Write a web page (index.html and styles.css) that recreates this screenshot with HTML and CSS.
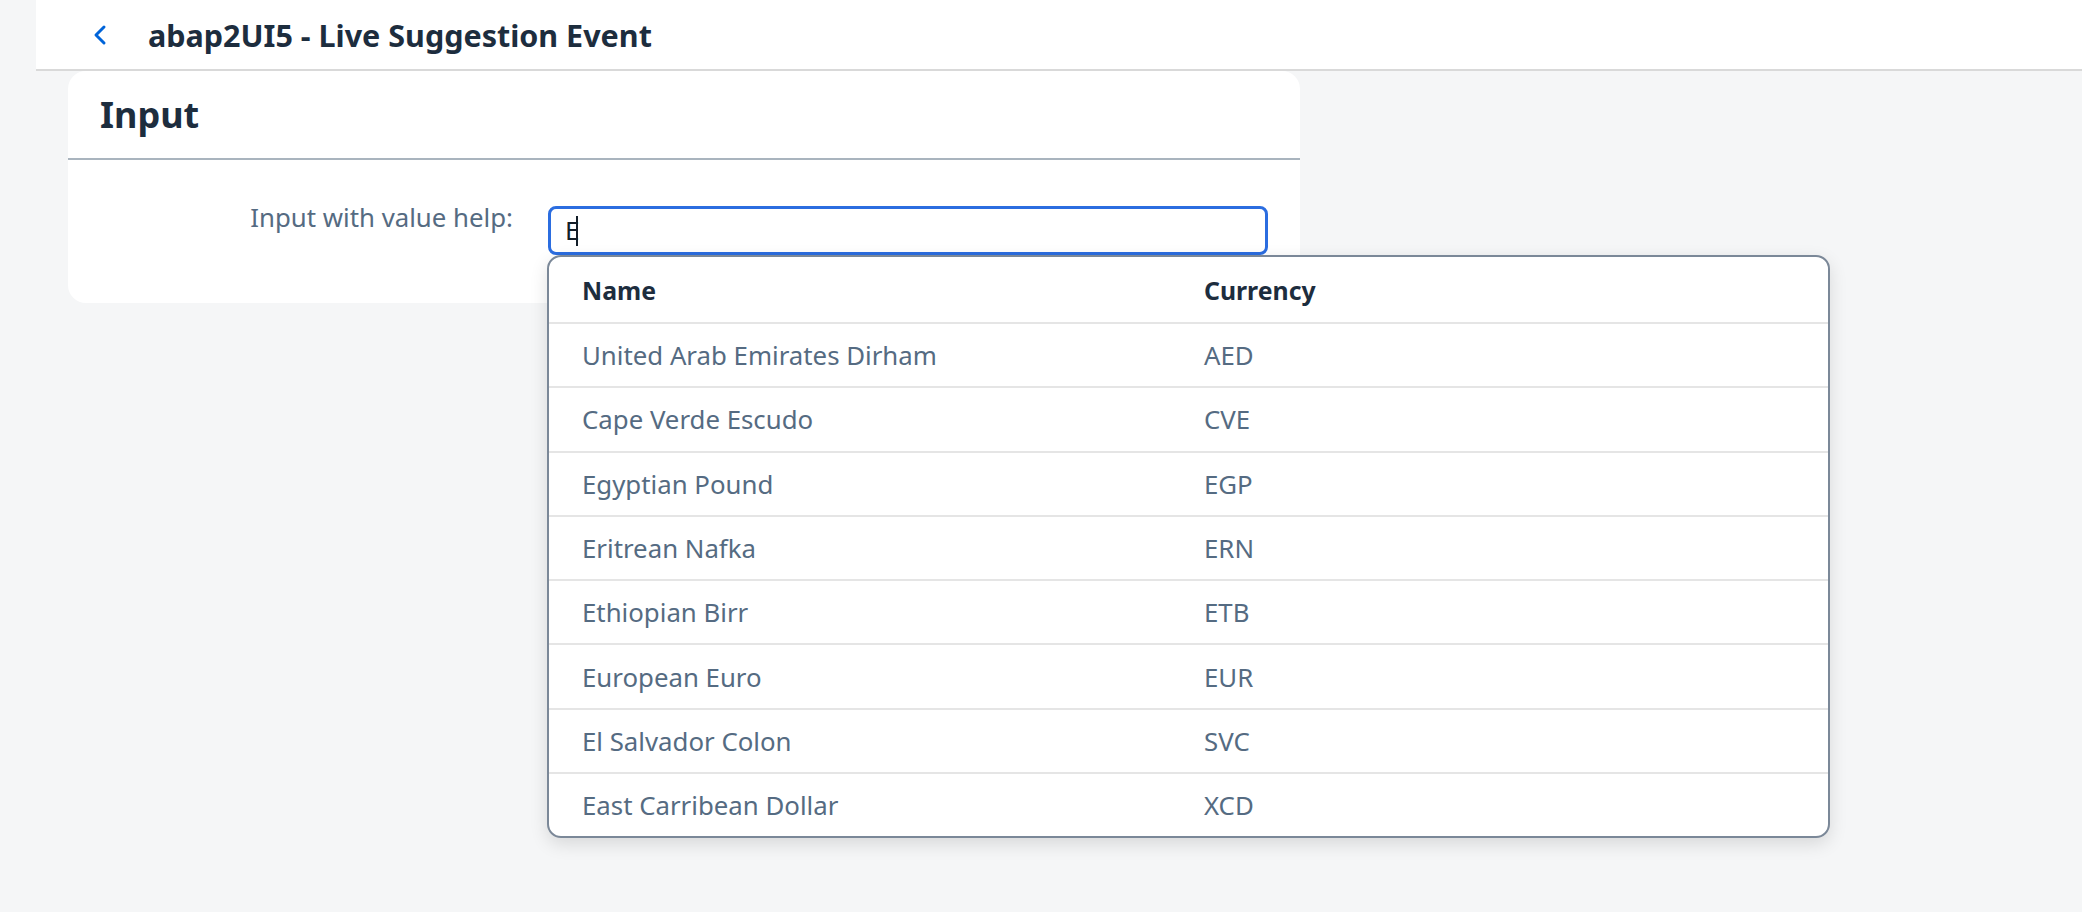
FILE: index.html
```html
<!DOCTYPE html>
<html lang="en">
<head>
<meta charset="utf-8">
<title>abap2UI5 - Live Suggestion Event</title>
<link rel="stylesheet" href="styles.css">
</head>
<body>
<div class="shell">
  <header class="bar">
    <button class="back" aria-label="Back">
      <svg width="16" height="22" viewBox="0 0 16 22"><polyline points="12,3 4,11 12,19" fill="none" stroke="#0064d9" stroke-width="3" stroke-linecap="round" stroke-linejoin="round"/></svg>
    </button>
    <h1 class="title">abap2UI5 - Live Suggestion Event</h1>
  </header>
  <main class="content">
    <section class="card">
      <div class="card-head"><h2 class="card-title">Input</h2></div>
      <div class="card-body">
        <div class="form-row">
          <label class="label">Input with value help:</label>
          <div class="field-wrap">
            <div class="input"><span class="value">E</span><span class="caret"></span></div>
            <div class="popup">
              <div class="row head"><div class="cell">Name</div><div class="cell">Currency</div></div>
              <div class="row"><div class="cell">United Arab Emirates Dirham</div><div class="cell">AED</div></div>
              <div class="row"><div class="cell">Cape Verde Escudo</div><div class="cell">CVE</div></div>
              <div class="row"><div class="cell">Egyptian Pound</div><div class="cell">EGP</div></div>
              <div class="row"><div class="cell">Eritrean Nafka</div><div class="cell">ERN</div></div>
              <div class="row"><div class="cell">Ethiopian Birr</div><div class="cell">ETB</div></div>
              <div class="row"><div class="cell">European Euro</div><div class="cell">EUR</div></div>
              <div class="row"><div class="cell">El Salvador Colon</div><div class="cell">SVC</div></div>
              <div class="row"><div class="cell">East Carribean Dollar</div><div class="cell">XCD</div></div>
            </div>
          </div>
        </div>
      </div>
    </section>
  </main>
</div>
</body>
</html>
```
FILE: styles.css
```css
* { box-sizing: border-box; }
html, body { margin: 0; padding: 0; }
body {
  background: #f5f6f7;
  font-family: "Noto Sans", "Liberation Sans", sans-serif;
  color: #1d2d3e;
  width: 2082px;
  height: 912px;
  overflow: hidden;
}
.shell { display: flex; flex-direction: column; }
.bar {
  margin-left: 36px;
  height: 71px;
  background: #fff;
  border-bottom: 2px solid #d9d9d9;
  display: flex;
  align-items: center;
  padding-left: 56px;
}
.back {
  border: 0;
  background: none;
  padding: 0;
  width: 16px;
  height: 22px;
  margin-right: 40px;
  display: flex;
}
.title {
  margin: 0;
  font-size: 30.5px;
  font-weight: 700;
  color: #1d2d3e;
  letter-spacing: 0;
}
.content { padding-left: 68px; }
.card {
  width: 1232px;
  height: 232px;
  background: #fff;
  border-radius: 18px;
}
.card-head {
  height: 89px;
  border-bottom: 2px solid #a9b4be;
  display: flex;
  align-items: center;
  padding-left: 32px;
}
.card-title {
  margin: 0;
  font-size: 36px;
  font-weight: 700;
  color: #1d2d3e;
}
.card-body { padding-top: 46px; }
.form-row { display: flex; align-items: flex-start; }
.label {
  width: 447px;
  text-align: right;
  font-size: 25.8px;
  line-height: 32px;
  color: #556b82;
  padding-right: 2px;
  margin-top: -5px;
}
.field-wrap { position: relative; margin-left: 33px; }
.input {
  width: 720px;
  height: 49px;
  border: 3px solid #2b6de0;
  border-radius: 8px;
  display: flex;
  align-items: center;
  padding-left: 14px;
  font-size: 25.8px;
  color: #131e29;
}
.value { line-height: 1; }
.caret {
  width: 2px;
  height: 30px;
  background: #131e29;
  margin-left: -3px;
}
.popup {
  position: absolute;
  left: -1px;
  top: 49px;
  width: 1283px;
  height: 583px;
  background: #fff;
  border: 2px solid #7b8898;
  border-radius: 14px;
  box-shadow: 0 6px 18px rgba(0, 0, 0, 0.12);
  overflow: hidden;
  z-index: 2;
}
.row {
  display: grid;
  grid-template-columns: 622px 1fr;
  height: 64.3px;
  border-top: 2px solid #e5e5e5;
  align-items: center;
  font-size: 25.8px;
  color: #556b82;
}
.row.head {
  height: 65px;
  border-top: 0;
  font-size: 24.8px;
  font-weight: 700;
  color: #1d2d3e;
}
.cell { padding-left: 33px; white-space: nowrap; }
```
